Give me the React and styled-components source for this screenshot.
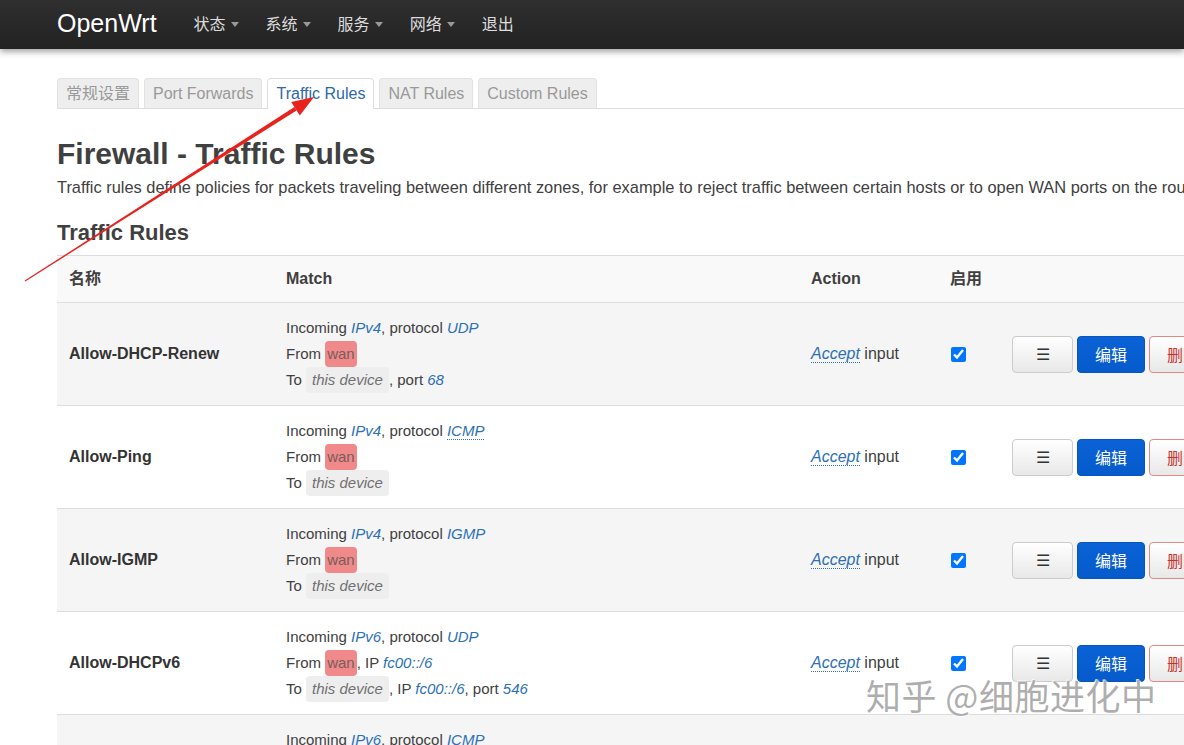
import React from "react";
import styled, { createGlobalStyle } from "styled-components";

const GlobalStyle = createGlobalStyle`
  html, body {
    margin: 0;
    padding: 0;
    overflow: hidden;
    background: #fff;
  }
  body {
    font-family: "Liberation Sans", "Noto Sans CJK SC", sans-serif;
    color: #404040;
  }
`;

const rules = [
  {
    name: "Allow-DHCP-Renew",
    family: "IPv4",
    proto: "UDP",
    from: [],
    to: [", port ", { link: "68" }],
  },
  {
    name: "Allow-Ping",
    family: "IPv4",
    proto: "ICMP",
    abbr: true,
    from: [],
    to: [],
  },
  {
    name: "Allow-IGMP",
    family: "IPv4",
    proto: "IGMP",
    from: [],
    to: [],
  },
  {
    name: "Allow-DHCPv6",
    family: "IPv6",
    proto: "UDP",
    from: [", IP ", { link: "fc00::/6" }],
    to: [", IP ", { link: "fc00::/6" }, ", port ", { link: "546" }],
  },
  {
    name: "Allow-MLD",
    family: "IPv6",
    proto: "ICMP",
    abbr: true,
    from: [", IP ", { link: "fe80::/10" }],
    to: [", type ", { link: "130/0" }],
  },
];

const App = () => {
  const renderParts = (parts) =>
    parts.map((p, i) =>
      typeof p === "string" ? <span key={i}>{p}</span> : <Link key={i}>{p.link}</Link>
    );

  return (
    <>
      <GlobalStyle />
      <TopBar>
        <Brand>OpenWrt</Brand>
        <Nav>
          {["状态", "系统", "服务", "网络"].map((item) => (
            <NavItem key={item}>
              {item}
              <Caret />
            </NavItem>
          ))}
          <NavItem>退出</NavItem>
        </Nav>
      </TopBar>

      <Main>
        <Tabs>
          <Tab>常规设置</Tab>
          <Tab>Port Forwards</Tab>
          <Tab active>Traffic Rules</Tab>
          <Tab>NAT Rules</Tab>
          <Tab>Custom Rules</Tab>
        </Tabs>

        <Title>Firewall - Traffic Rules</Title>
        <Description>
          Traffic rules define policies for packets traveling between different zones, for
          example to reject traffic between certain hosts or to open WAN ports on the router.
        </Description>

        <SectionTitle>Traffic Rules</SectionTitle>

        <Table>
          <colgroup>
            <col style={{ width: 217 }} />
            <col style={{ width: 525 }} />
            <col style={{ width: 139 }} />
            <col style={{ width: 62 }} />
            <col />
          </colgroup>
          <thead>
            <tr>
              <HeadCell>名称</HeadCell>
              <HeadCell>Match</HeadCell>
              <HeadCell>Action</HeadCell>
              <HeadCell>启用</HeadCell>
              <HeadCell />
            </tr>
          </thead>
          <tbody>
            {rules.map((rule, idx) => (
              <Row key={rule.name} striped={idx % 2 === 0}>
                <NameCell>{rule.name}</NameCell>
                <Cell>
                  <MatchLine>
                    Incoming <Link>{rule.family}</Link>, protocol{" "}
                    {rule.abbr ? <Link dotted>{rule.proto}</Link> : <Link>{rule.proto}</Link>}
                  </MatchLine>
                  <MatchLine>
                    From <ZoneBadge>wan</ZoneBadge>
                    {renderParts(rule.from)}
                  </MatchLine>
                  <MatchLine>
                    To <DeviceBadge>this device</DeviceBadge>
                    {renderParts(rule.to)}
                  </MatchLine>
                </Cell>
                <ActionCell>
                  <Link dotted>Accept</Link> input
                </ActionCell>
                <Cell>
                  <Check type="checkbox" defaultChecked />
                </Cell>
                <Cell>
                  <BtnGroup>
                    <Button wide>☰</Button>
                    <Button variant="primary">编辑</Button>
                    <Button variant="danger">删除</Button>
                  </BtnGroup>
                </Cell>
              </Row>
            ))}
          </tbody>
        </Table>
      </Main>

      <Arrow viewBox="0 0 1184 745">
        <polygon points="24.7,280.6 25.3,281.4 296.6,110.5 294.4,107.1" fill="#e8231e" />
        <polygon points="314,97 291.2,102.1 299.8,115.5" fill="#e8231e" />
      </Arrow>

      <Watermark>知乎 @细胞进化中</Watermark>
    </>
  );
};

const TopBar = styled.header`
  height: 49px;
  display: flex;
  align-items: center;
  padding-left: 57px;
  background: linear-gradient(#2f2f2f, #222);
  box-shadow: 0 3px 6px rgba(0, 0, 0, 0.35);
  position: relative;
  z-index: 2;
`;

const Brand = styled.div`
  color: #fff;
  font-size: 25px;
  margin-right: 37px;
  margin-top: -2px;
`;

const Nav = styled.nav`
  display: flex;
  align-items: center;
  gap: 27px;
  margin-top: -3px;
`;

const NavItem = styled.div`
  display: flex;
  align-items: center;
  gap: 5px;
  color: #ddd;
  font-size: 16px;
`;

const Caret = styled.span`
  width: 0;
  height: 0;
  border-left: 4px solid transparent;
  border-right: 4px solid transparent;
  border-top: 5px solid #999;
  margin-top: 2px;
`;

const Main = styled.main`
  width: 1400px;
  box-sizing: border-box;
  padding-left: 57px;
`;

const Tabs = styled.div`
  display: flex;
  align-items: flex-end;
  gap: 5px;
  margin-top: 29px;
  border-bottom: 1px solid #ddd;
`;

const Tab = styled.div`
  line-height: 29px;
  padding: 0 8px;
  font-size: 16px;
  border: 1px solid ${(p) => (p.active ? "#ddd" : "#e2e2e2")};
  border-bottom: none;
  border-radius: 4px 4px 0 0;
  background: ${(p) => (p.active ? "#fff" : "#eee")};
  color: ${(p) => (p.active ? "#2c6aa8" : "#999")};
  margin-bottom: ${(p) => (p.active ? "-1px" : "0")};
  height: ${(p) => (p.active ? "30px" : "29px")};
`;

const Title = styled.h2`
  margin: 28px 0 0;
  font-size: 30px;
  line-height: 33px;
  font-weight: bold;
  color: #404040;
`;

const Description = styled.p`
  margin: 7px 0 0;
  font-size: 16.4px;
  line-height: 21px;
  white-space: nowrap;
`;

const SectionTitle = styled.h3`
  margin: 22px 0 0;
  font-size: 22px;
  line-height: 26px;
  font-weight: bold;
  color: #404040;
`;

const Table = styled.table`
  margin-top: 9px;
  width: 1183px;
  table-layout: fixed;
  border-collapse: collapse;
  border-top: 1px solid #ddd;
`;

const HeadCell = styled.th`
  text-align: left;
  background: #f9f9f9;
  font-size: 16px;
  font-weight: bold;
  padding: 12px;
  height: 22px;
  line-height: 22px;
  color: #404040;
  border-bottom: 1px solid #ddd;
`;

const Row = styled.tr`
  background: ${(p) => (p.striped ? "#f5f5f5" : "#fff")};
  border-bottom: 1px solid #ddd;
`;

const Cell = styled.td`
  padding: 12px;
  vertical-align: middle;
`;

const NameCell = styled(Cell)`
  font-size: 16px;
  font-weight: bold;
  color: #333;
`;

const ActionCell = styled(Cell)`
  font-size: 16px;
`;

const MatchLine = styled.div`
  font-size: 15px;
  line-height: 26px;
  white-space: nowrap;
`;

const Link = styled.span`
  color: #2c70b5;
  font-style: italic;
  border-bottom: ${(p) => (p.dotted ? "1px dotted #2c70b5" : "none")};
`;

const ZoneBadge = styled.span`
  display: inline-block;
  line-height: 26px;
  padding: 0 2px;
  border-radius: 4px;
  background: #f08a8a;
  color: #7a5c5c;
  vertical-align: top;
`;

const DeviceBadge = styled.span`
  display: inline-block;
  line-height: 26px;
  padding: 0 6px;
  border-radius: 4px;
  background: #eee;
  color: #707070;
  font-style: italic;
  vertical-align: top;
`;

const Check = styled.input`
  width: 15px;
  height: 15px;
  margin: 0 0 0 1px;
  vertical-align: middle;
`;

const BtnGroup = styled.div`
  display: flex;
  gap: 4px;
`;

const Button = styled.button`
  height: 37px;
  min-width: ${(p) => (p.wide ? "61px" : "68px")};
  padding: 0 16px;
  font-family: "Liberation Sans", "Noto Sans CJK SC", sans-serif;
  font-size: 16px;
  border-radius: 4px;
  border: 1px solid
    ${(p) =>
      p.variant === "primary" ? "#0855bd" : p.variant === "danger" ? "#df8a87" : "#ccc"};
  background: ${(p) =>
    p.variant === "primary"
      ? "linear-gradient(#0a62d6, #055bcb)"
      : "linear-gradient(#fff, #e8e8e8)"};
  color: ${(p) =>
    p.variant === "primary" ? "#fff" : p.variant === "danger" ? "#c9302c" : "#333"};
`;

const Arrow = styled.svg`
  position: absolute;
  top: 0;
  left: 0;
  width: 1184px;
  height: 745px;
  pointer-events: none;
  z-index: 3;
`;

const Watermark = styled.div`
  position: absolute;
  left: 866px;
  top: 669px;
  font-family: "Noto Sans CJK SC", sans-serif;
  font-size: 35px;
  letter-spacing: 0.5px;
  color: rgba(120, 120, 120, 0.6);
  text-shadow: 0 0 1px #fff, 1px 1px 0 rgba(255, 255, 255, 0.8),
    -1px -1px 0 rgba(255, 255, 255, 0.8);
  pointer-events: none;
  z-index: 4;
`;

export default App;
